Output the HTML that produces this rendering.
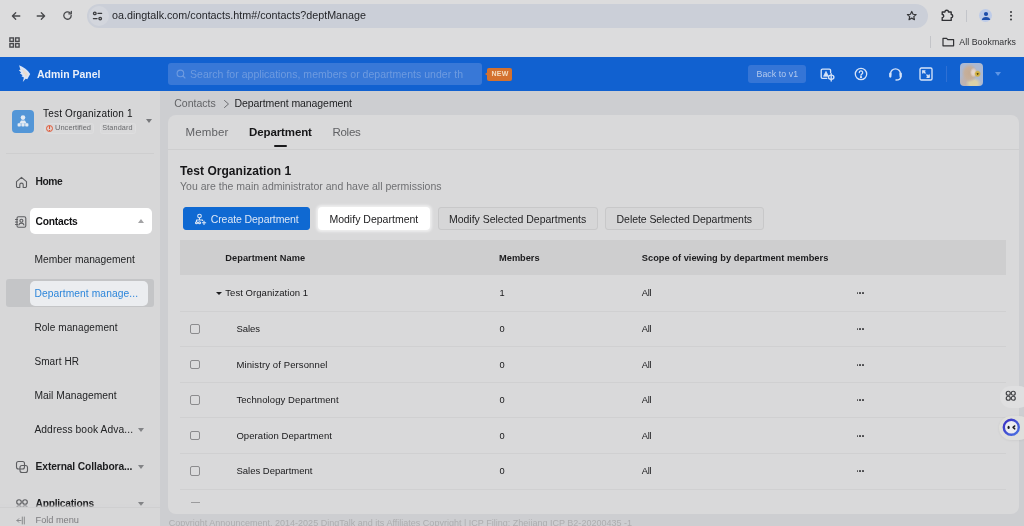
<!DOCTYPE html>
<html>
<head>
<meta charset="utf-8">
<style>
*{box-sizing:border-box;margin:0;padding:0}
html,body{width:1024px;height:526px;overflow:hidden;background:#cdced1;font-family:"Liberation Sans",sans-serif;color:#1a1a1a}
.abs{position:absolute}
.t{position:absolute;height:16px;line-height:16px;white-space:nowrap}
#chrome{position:absolute;left:0;top:0;width:1024px;height:57px;background:#dcdcdd}
#url{position:absolute;left:87px;top:4px;width:841px;height:24px;border-radius:12px;background:#cbcfd8}
#bar{position:absolute;left:0;top:57px;width:1024px;height:34px;background:#1161d0}
#search{position:absolute;left:168px;top:63px;width:314px;height:22px;border-radius:3px;background:#3878d7}
#back{position:absolute;left:748px;top:65px;width:58px;height:18px;border-radius:3px;background:#3575d6}
#side{position:absolute;left:0;top:91px;width:160px;height:435px;background:#d7d7d8}
#card{position:absolute;left:167.5px;top:114.5px;width:851.5px;height:399.5px;border-radius:8px;background:#d9d9da}
.btn{position:absolute;top:207px;height:24px;border-radius:3px;border:1px solid #c8c8c9;background:#d6d6d7}
.cb{position:absolute;left:190.3px;width:9.7px;height:9.7px;border:1px solid #8b8b8d;border-radius:2px;background:#dbdbdc}
.car{position:absolute;width:0;height:0;border-left:3px solid transparent;border-right:3px solid transparent}
</style>
</head>
<body>
<div id="wrap" style="position:absolute;left:0;top:0;width:1024px;height:526px;overflow:hidden;will-change:transform">
<div id="chrome">
  <div id="url"></div>
  <!-- nav icons -->
  <svg class="abs" style="left:10.500px;top:10.700px" width="10" height="10" viewBox="0 0 10 10" fill="none" stroke="#48494c" stroke-width="1.300" stroke-linecap="round" stroke-linejoin="round"><path d="M8.800 5H1.600M4.700 1.700L1.400 5l3.300 3.300"/></svg>
  <svg class="abs" style="left:36.200px;top:10.700px" width="10" height="10" viewBox="0 0 10 10" fill="none" stroke="#48494c" stroke-width="1.300" stroke-linecap="round" stroke-linejoin="round"><path d="M1.200 5h7.200M5.300 1.700L8.600 5 5.300 8.300"/></svg>
  <svg class="abs" style="left:61.800px;top:10.300px" width="11" height="11" viewBox="0 0 11 11" fill="none" stroke="#48494c" stroke-width="1.300" stroke-linecap="round" stroke-linejoin="round"><path d="M9.200 5.500a3.700 3.700 0 1 1-1.200-2.700"/><path d="M9.300 1.300v2.500H6.800" /></svg>
  <!-- site settings icon -->
  <div class="abs" style="left:88.500px;top:6px;width:20px;height:20px;border-radius:10px;background:#d3d6dd"></div>
  <svg class="abs" style="left:92.200px;top:9.800px" width="11" height="12" viewBox="0 0 11 12" fill="none" stroke="#3a3b3e" stroke-width="1.300" stroke-linecap="round"><circle cx="2.800" cy="3.400" r="1.300"/><path d="M6 3.400h3.600"/><circle cx="8.200" cy="8.600" r="1.300"/><path d="M1.400 8.600h3.600"/></svg>
  <!-- star -->
  <svg class="abs" style="left:905.500px;top:10px" width="11.500" height="11.500" viewBox="0 0 14 14" fill="none" stroke="#36373a" stroke-width="1.450" stroke-linejoin="round"><path d="M7 1.800l1.600 3.400 3.700.4-2.800 2.500.8 3.700L7 9.900l-3.300 1.900.8-3.700L1.700 5.600l3.700-.4z"/></svg>
  <!-- extensions -->
  <svg class="abs" style="left:940px;top:8px" width="15" height="14" viewBox="0 0 15 14" fill="none" stroke="#303135" stroke-width="1.350" stroke-linejoin="round"><path d="M2.200 4H4.900a1.800 1.800 0 0 1 3.600 0H11.200V6.500a1.550 1.550 0 0 1 0 3.100V12.400H2.200V9.600a1.550 1.550 0 0 0 0-3.100z"/></svg>
  <div class="abs" style="left:966px;top:9.500px;width:1px;height:12px;background:#c3c5ca"></div>
  <!-- profile -->
  <div class="abs" style="left:978.900px;top:8.800px;width:13.600px;height:13.600px;border-radius:7px;background:#bdcbe8"></div>
  <svg class="abs" style="left:980.700px;top:10.600px" width="10" height="10" viewBox="0 0 12 12" fill="#1c4daa"><circle cx="6" cy="3.600" r="2.500"/><path d="M1 10.800c0-2.600 2.300-3.700 5-3.700s5 1.100 5 3.700z"/></svg>
  <!-- menu dots -->
  <div class="abs" style="left:1010.200px;top:10.800px;width:2.300px;height:2.300px;border-radius:2px;background:#36373a;box-shadow:0 3.800px 0 #36373a,0 7.600px 0 #36373a"></div>
  <!-- bookmarks bar -->
  <svg class="abs" style="left:8.800px;top:36.600px" width="11" height="11" viewBox="0 0 12 12" fill="none" stroke="#48494c" stroke-width="1.500"><rect x="1" y="1" width="3.800" height="3.800"/><rect x="7.200" y="1" width="3.800" height="3.800"/><rect x="1" y="7.200" width="3.800" height="3.800"/><rect x="7.200" y="7.200" width="3.800" height="3.800"/></svg>
  <div class="abs" style="left:930px;top:36px;width:1px;height:12px;background:#c3c4c8"></div>
  <svg class="abs" style="left:941.500px;top:37px" width="13" height="10" viewBox="0 0 13 10" fill="none" stroke="#303135" stroke-width="1.200" stroke-linejoin="round"><path d="M1 1.300h3.600l1.200 1.300h5.800v6.200H1z"/></svg>
</div>
<div id="bar"></div>
<!-- logo -->
<svg class="abs" style="left:17px;top:64px" width="15" height="19" viewBox="0 0 15 19"><path fill="#dbe5f6" d="M2.100 1.300C6.200 2.800 11.200 6.300 13.200 10.100L10.300 15.300 8.600 14.700 5.800 18.100 6.900 13.600 4.500 12.300 5.500 11.300 2.800 9.300 4.200 8.700 1.800 5.900 3.400 5.700z"/><path fill="#e9dccf" d="M4.500 4.500C7 6 9.500 8 11 10.200L9.500 13 7.500 12 8 10.500 6 9.500 6.500 8.500z"/></svg>
<div id="search">
  <svg class="abs" style="left:8px;top:6px" width="10" height="10" viewBox="0 0 10 10" fill="none" stroke="#6e9be0" stroke-width="1.100" stroke-linecap="round"><circle cx="4.400" cy="4.400" r="3.300"/><path d="M7 7l2 2"/></svg>
</div>
<!-- NEW tag -->
<div class="abs" style="left:487px;top:68px;width:25px;height:12.500px;background:#d4712e;border-radius:2px;color:#f3dcc0;font-size:7px;font-weight:bold;text-align:center;line-height:12.500px;letter-spacing:0.200px;padding-left:1px">NEW</div>
<div class="abs" style="left:485px;top:71.700px;width:0;height:0;border-top:2.600px solid transparent;border-bottom:2.600px solid transparent;border-right:3px solid #d4712e"></div>
<div id="back"></div>
<!-- right icons -->
<svg class="abs" style="left:820px;top:68px" width="16" height="14" viewBox="0 0 16 14" fill="none" stroke="#d6e3f8" stroke-width="1.350" stroke-linejoin="round" stroke-linecap="round"><path d="M6.800 10.300H2.500a1.300 1.300 0 0 1-1.300-1.300V2.400a1.300 1.300 0 0 1 1.300-1.300h6.800a1.300 1.300 0 0 1 1.300 1.300v2"/><path d="M3.700 8L6 3.400 8.300 8z" fill="#d6e3f8" stroke-width="0.800"/><ellipse cx="11.200" cy="9.200" rx="2.700" ry="2.100"/><path d="M11.200 5.600v7.400"/></svg>
<svg class="abs" style="left:854.300px;top:67px" width="14" height="14" viewBox="0 0 14 14" fill="none" stroke="#d6e3f8" stroke-width="1.300" stroke-linecap="round"><circle cx="7" cy="7" r="5.700"/><path d="M5.300 5.600a1.700 1.700 0 1 1 2.500 1.500c-.5.300-.8.600-.8 1.200"/><circle cx="7" cy="10.200" r=".5" fill="#d6e3f8"/></svg>
<svg class="abs" style="left:888px;top:67px" width="15" height="14" viewBox="0 0 15 14" fill="none" stroke="#d6e3f8" stroke-width="1.400" stroke-linecap="round"><path d="M2.600 8V6.800a4.900 4.900 0 0 1 9.800 0V8"/><path d="M2.300 6.600v3M12.700 6.600v3" stroke-width="2.300"/><path d="M12.700 10c0 1.900-1.800 3-4.700 3"/></svg>
<svg class="abs" style="left:918.500px;top:67px" width="14" height="14" viewBox="0 0 14 14" fill="none" stroke="#d6e3f8" stroke-width="1.350" stroke-linejoin="round" stroke-linecap="round"><rect x="1" y="1" width="12" height="12" rx="1.300"/><path d="M3.800 6V3.800H6M3.800 3.800l2.300 2.300M10.200 8v2.200H8M10.200 10.200L7.900 7.900"/></svg>
<div class="abs" style="left:946px;top:66px;width:1px;height:16px;background:#2f70d4"></div>
<!-- avatar -->
<div class="abs" style="left:960px;top:63px;width:22.500px;height:22.500px;border-radius:4px;overflow:hidden;background:
radial-gradient(ellipse 1.300px 1.300px at 17.600px 10.800px,#5e4d14 0%,#5e4d14 50%,rgba(94,77,20,0) 100%),
radial-gradient(ellipse 3.400px 3.600px at 17.600px 10.800px,#d0b040 0%,#d0b040 60%,rgba(208,176,64,0) 100%),
radial-gradient(ellipse 3.500px 5px at 13.500px 9.500px,#e6d8cf 0%,#e2d2c8 50%,rgba(226,210,200,0) 100%),
radial-gradient(ellipse 8px 9.500px at 9.500px 10px,#c4ab94 0%,#c6af9b 60%,rgba(198,175,155,0) 100%),
radial-gradient(ellipse 8px 6px at 13.500px 20.500px,#dbd2a4 0%,#d9d0aa 50%,rgba(217,208,170,0) 100%),
radial-gradient(ellipse 8px 8px at 6px 19px,#bfb3b0 0%,#bfb3b0 40%,rgba(191,179,176,0) 100%),
#adb9d1"></div>
<div class="car" style="left:994.500px;top:72px;border-top:4.200px solid #5d95e6"></div>

<div id="side"></div>
<div id="card"></div>

<!-- SIDEBAR -->
<div class="abs" style="left:11.500px;top:110.400px;width:22.600px;height:22.700px;border-radius:4px;background:#5396d7"></div>
<svg class="abs" style="left:14.800px;top:113.800px" width="16" height="16" viewBox="0 0 16 16" fill="#e2eaf3"><circle cx="8" cy="3.600" r="2.300"/><path d="M4.300 9.600L6 6.600h4l1.700 3z"/><rect x="2.600" y="9.200" width="3.200" height="3.200" rx=".7"/><rect x="6.400" y="9.200" width="3.200" height="3.200" rx=".7"/><rect x="10.200" y="9.200" width="3.200" height="3.200" rx=".7"/></svg>
<div class="abs" style="left:43.500px;top:123.400px;width:50.500px;height:10.400px;border:1px solid #dededf;border-radius:2.500px;background:#d9d9da"></div>
<div class="abs" style="left:45.600px;top:124.600px;width:7.400px;height:7.400px;border-radius:4px;border:1.100px solid #df5a3a;background:#e2cfc9"></div>
<div class="abs" style="left:48.700px;top:126.300px;width:1.100px;height:2.600px;background:#df5a3a"></div>
<div class="abs" style="left:48.700px;top:129.500px;width:1.100px;height:1.100px;background:#df5a3a"></div>
<div class="abs" style="left:99.500px;top:123.400px;width:36.500px;height:10.400px;border:1px solid #dededf;border-radius:2.500px;background:#d9d9da"></div>
<div class="car" style="left:146.200px;top:119.300px;border-top:4.600px solid #77787b"></div>
<div class="abs" style="left:6px;top:152.500px;width:148px;height:1px;background:#cececf"></div>

<!-- Home icon -->
<svg class="abs" style="left:15px;top:175.500px" width="13" height="13" viewBox="0 0 13 13" fill="none" stroke="#5c5d60" stroke-width="1.100" stroke-linejoin="round" stroke-linecap="round"><path d="M1.500 5.600L6.500 1.300 11.500 5.600v4.600a1.300 1.300 0 0 1-1.300 1.300H8.200V8.800a1.700 1.700 0 0 0-3.400 0v2.700H2.800a1.300 1.300 0 0 1-1.300-1.300z"/></svg>
<!-- Contacts highlighted -->
<div class="abs" style="left:29.600px;top:207.700px;width:122.800px;height:26.800px;border-radius:5px;background:#ffffff"></div>
<svg class="abs" style="left:14px;top:215px" width="14" height="14" viewBox="0 0 14 14" fill="none" stroke="#5c5d60" stroke-width="1.100" stroke-linejoin="round" stroke-linecap="round"><rect x="3" y="1.700" width="8.800" height="10.600" rx="1.500"/><circle cx="7.400" cy="5.700" r="1.500"/><path d="M4.900 9.900c.3-1.300 1.300-1.800 2.500-1.800s2.200.5 2.500 1.800"/><path d="M1.500 4.500h2M1.500 7h2M1.500 9.500h2"/></svg>
<div class="car" style="left:138.400px;top:219.300px;border-bottom:4.400px solid #a3a3a5"></div>

<div class="abs" style="left:6px;top:279px;width:148px;height:27.800px;border-radius:3px;background:#c4c5c7"></div>
<div class="abs" style="left:30.200px;top:281px;width:118px;height:24.700px;border-radius:5px;background:#ebedf0"></div>
<div class="car" style="left:138.400px;top:427.5px;border-top:4.600px solid #828386"></div>

<svg class="abs" style="left:14.500px;top:460px" width="14" height="14" viewBox="0 0 14 14" fill="none" stroke="#5c5d60" stroke-width="1.100" stroke-linejoin="round" stroke-linecap="round"><rect x="1.500" y="1.500" width="8" height="7.500" rx="2"/><rect x="5" y="5.500" width="7.500" height="7" rx="2"/></svg>
<div class="car" style="left:138.400px;top:464.9px;border-top:4.600px solid #828386"></div>

<svg class="abs" style="left:14.500px;top:497.500px" width="14" height="14" viewBox="0 0 14 14" fill="none" stroke="#5c5d60" stroke-width="1.100"><circle cx="4" cy="4" r="2.300"/><circle cx="10" cy="4" r="2.300"/><circle cx="4" cy="10" r="2.300"/><circle cx="10" cy="10" r="2.300"/></svg>
<div class="car" style="left:138.400px;top:501.5px;border-top:4.600px solid #828386"></div>

<!-- MAIN -->
<svg class="abs" style="left:223px;top:98.500px" width="7" height="10" viewBox="0 0 7 10" fill="none" stroke="#6c6d70" stroke-width="1" stroke-linecap="round" stroke-linejoin="round"><path d="M1.500 1.500L5.500 5 1.500 8.500"/></svg>
<div class="abs" style="left:273.500px;top:144.500px;width:13.800px;height:2.300px;border-radius:1.200px;background:#1a1a1c"></div>
<div class="abs" style="left:167.500px;top:149px;width:851.500px;height:1px;background:#cececf"></div>

<!-- buttons -->
<div class="btn" style="left:183.300px;width:127px;background:#0f69d2;border-color:#0f69d2;top:207.100px;height:23.200px"></div>
<svg class="abs" style="left:193.500px;top:213px" width="13" height="12" viewBox="0 0 13 12" fill="none" stroke="#dfe8f6" stroke-width="1.100" stroke-linecap="round"><circle cx="5.500" cy="3" r="1.800"/><path d="M5.500 5v2M2.500 7h6M2.500 7v1.500M8.500 7v.5"/><circle cx="2.500" cy="9.800" r="1"/><circle cx="5.500" cy="9.800" r="1"/><path d="M10 8v3.500M8.300 9.800h3.400"/></svg>
<div class="abs" style="left:318.300px;top:207px;width:111.700px;height:23.400px;border-radius:4px;background:#ffffff;box-shadow:0 0 2.500px 1.200px rgba(255,255,255,0.550)"></div>
<div class="btn" style="left:437.700px;width:160.200px;top:207px;height:23.400px"></div>
<div class="btn" style="left:605.300px;width:158.400px;top:207px;height:23.400px"></div>

<!-- table -->
<div class="abs" style="left:179.600px;top:240.300px;width:826.400px;height:35px;background:#cececf"></div>
<div class="abs" style="left:215.7px;top:291.7px;width:0;height:0;border-left:3px solid transparent;border-right:3px solid transparent;border-top:3.8px solid #1d1d1f"></div><div class="abs" style="left:856.5px;top:292px;width:1.7px;height:2px;border-radius:0.5px;background:#4c4c4e"></div><div class="abs" style="left:859.2px;top:292px;width:1.7px;height:2px;border-radius:0.5px;background:#4c4c4e"></div><div class="abs" style="left:861.9px;top:292px;width:1.7px;height:2px;border-radius:0.5px;background:#4c4c4e"></div><div class="abs" style="left:180px;top:310.5px;width:826px;height:1px;background:#d0d0d1"></div>
<div class="cb" style="top:324.0px"></div><div class="abs" style="left:856.5px;top:328px;width:1.7px;height:2px;border-radius:0.5px;background:#4c4c4e"></div><div class="abs" style="left:859.2px;top:328px;width:1.7px;height:2px;border-radius:0.5px;background:#4c4c4e"></div><div class="abs" style="left:861.9px;top:328px;width:1.7px;height:2px;border-radius:0.5px;background:#4c4c4e"></div><div class="abs" style="left:180px;top:346.0px;width:826px;height:1px;background:#d0d0d1"></div>
<div class="cb" style="top:359.6px"></div><div class="abs" style="left:856.5px;top:364px;width:1.7px;height:2px;border-radius:0.5px;background:#4c4c4e"></div><div class="abs" style="left:859.2px;top:364px;width:1.7px;height:2px;border-radius:0.5px;background:#4c4c4e"></div><div class="abs" style="left:861.9px;top:364px;width:1.7px;height:2px;border-radius:0.5px;background:#4c4c4e"></div><div class="abs" style="left:180px;top:381.7px;width:826px;height:1px;background:#d0d0d1"></div>
<div class="cb" style="top:395.2px"></div><div class="abs" style="left:856.5px;top:399px;width:1.7px;height:2px;border-radius:0.5px;background:#4c4c4e"></div><div class="abs" style="left:859.2px;top:399px;width:1.7px;height:2px;border-radius:0.5px;background:#4c4c4e"></div><div class="abs" style="left:861.9px;top:399px;width:1.7px;height:2px;border-radius:0.5px;background:#4c4c4e"></div><div class="abs" style="left:180px;top:417.3px;width:826px;height:1px;background:#d0d0d1"></div>
<div class="cb" style="top:430.8px"></div><div class="abs" style="left:856.5px;top:435px;width:1.7px;height:2px;border-radius:0.5px;background:#4c4c4e"></div><div class="abs" style="left:859.2px;top:435px;width:1.7px;height:2px;border-radius:0.5px;background:#4c4c4e"></div><div class="abs" style="left:861.9px;top:435px;width:1.7px;height:2px;border-radius:0.5px;background:#4c4c4e"></div><div class="abs" style="left:180px;top:453.0px;width:826px;height:1px;background:#d0d0d1"></div>
<div class="cb" style="top:466.4px"></div><div class="abs" style="left:856.5px;top:470px;width:1.7px;height:2px;border-radius:0.5px;background:#4c4c4e"></div><div class="abs" style="left:859.2px;top:470px;width:1.7px;height:2px;border-radius:0.5px;background:#4c4c4e"></div><div class="abs" style="left:861.9px;top:470px;width:1.7px;height:2px;border-radius:0.5px;background:#4c4c4e"></div><div class="abs" style="left:180px;top:488.8px;width:826px;height:1px;background:#d0d0d1"></div>
<div class="abs" style="left:191px;top:502px;width:8.500px;height:1px;background:#9b9b9d"></div>

<div class="t" style="left:112.0px;top:7.0px;font-size:10.75px;color:#25262a;letter-spacing:0.001px;">oa.dingtalk.com/contacts.htm#/contacts?deptManage</div>
<div class="t" style="left:959.3px;top:33.8px;font-size:8.75px;color:#303134;letter-spacing:0.065px;">All Bookmarks</div>
<div class="t" style="left:37.0px;top:66.2px;font-size:10.5px;color:#e9eff9;letter-spacing:-0.010px;font-weight:bold;">Admin Panel</div>
<div class="t" style="left:190.0px;top:66.0px;font-size:10.5px;color:#6e9be0;letter-spacing:0.029px;">Search for applications, members or departments under th</div>
<div class="t" style="left:756.5px;top:66.0px;font-size:8.75px;color:#b4caee;letter-spacing:0.071px;">Back to v1</div>
<div class="t" style="left:43.0px;top:105.6px;font-size:10px;color:#131416;letter-spacing:0.191px;">Test Organization 1</div>
<div class="t" style="left:55.0px;top:120.4px;font-size:7.5px;color:#696a6d;letter-spacing:0.014px;">Uncertified</div>
<div class="t" style="left:102.3px;top:120.4px;font-size:7.25px;color:#696a6d;letter-spacing:0.109px;">Standard</div>
<div class="t" style="left:35.6px;top:174.4px;font-size:10.25px;color:#1b1c1e;letter-spacing:-0.460px;font-weight:bold;">Home</div>
<div class="t" style="left:35.6px;top:214.3px;font-size:10.25px;color:#111113;letter-spacing:-0.236px;font-weight:bold;">Contacts</div>
<div class="t" style="left:34.4px;top:251.9px;font-size:10.25px;color:#222325;letter-spacing:0.008px;">Member management</div>
<div class="t" style="left:34.4px;top:285.8px;font-size:10.25px;color:#2d86da;letter-spacing:0.085px;">Department manage...</div>
<div class="t" style="left:34.4px;top:320.3px;font-size:10.0px;color:#222325;letter-spacing:0.099px;">Role management</div>
<div class="t" style="left:34.4px;top:354.1px;font-size:10.0px;color:#222325;letter-spacing:0.101px;">Smart HR</div>
<div class="t" style="left:34.4px;top:388.1px;font-size:10.25px;color:#222325;letter-spacing:0.059px;">Mail Management</div>
<div class="t" style="left:34.4px;top:422.2px;font-size:10.25px;color:#222325;letter-spacing:0.091px;">Address book Adva...</div>
<div class="t" style="left:35.6px;top:459.0px;font-size:10.25px;color:#1b1c1e;letter-spacing:-0.121px;font-weight:bold;">External Collabora...</div>
<div class="t" style="left:35.6px;top:495.7px;font-size:10.25px;color:#1b1c1e;letter-spacing:-0.274px;font-weight:bold;">Applications</div>
<div class="t" style="left:174.3px;top:95.3px;font-size:10.5px;color:#626366;letter-spacing:-0.005px;">Contacts</div>
<div class="t" style="left:234.5px;top:95.3px;font-size:10.5px;color:#1d1e20;letter-spacing:-0.079px;">Department management</div>
<div class="t" style="left:185.6px;top:124.0px;font-size:11.5px;color:#606164;letter-spacing:0.105px;">Member</div>
<div class="t" style="left:249.1px;top:124.0px;font-size:11.5px;color:#161618;letter-spacing:-0.123px;font-weight:bold;">Department</div>
<div class="t" style="left:332.4px;top:124.0px;font-size:11.5px;color:#606164;letter-spacing:-0.253px;">Roles</div>
<div class="t" style="left:180.1px;top:162.8px;font-size:12.0px;color:#161618;letter-spacing:0.040px;font-weight:bold;">Test Organization 1</div>
<div class="t" style="left:180.0px;top:178.2px;font-size:10.5px;color:#6f7073;letter-spacing:0.008px;">You are the main administrator and have all permissions</div>
<div class="t" style="left:210.7px;top:211.1px;font-size:10.5px;color:#dde7f6;letter-spacing:-0.075px;">Create Department</div>
<div class="t" style="left:329.4px;top:211.1px;font-size:10.5px;color:#1b1b1d;letter-spacing:0.012px;">Modify Department</div>
<div class="t" style="left:449.0px;top:211.1px;font-size:10.5px;color:#242426;letter-spacing:-0.021px;">Modify Selected Departments</div>
<div class="t" style="left:616.6px;top:211.1px;font-size:10.5px;color:#242426;letter-spacing:-0.068px;">Delete Selected Departments</div>
<div class="t" style="left:225.3px;top:249.8px;font-size:9.25px;color:#1c1c1e;letter-spacing:0.045px;font-weight:bold;">Department Name</div>
<div class="t" style="left:499.1px;top:249.8px;font-size:9.25px;color:#1c1c1e;letter-spacing:-0.020px;font-weight:bold;">Members</div>
<div class="t" style="left:641.8px;top:249.8px;font-size:9.25px;color:#1c1c1e;letter-spacing:0.025px;font-weight:bold;">Scope of viewing by department members</div>
<div class="t" style="left:168.7px;top:515.4px;font-size:9.0px;color:#adadaf;letter-spacing:0.011px;">Copyright Announcement. 2014-2025 DingTalk and its Affiliates Copyright | ICP Filing: Zhejiang ICP B2-20200435 -1</div>
<div class="t" style="left:225.3px;top:285.2px;font-size:9.5px;color:#18181a;letter-spacing:0.052px;">Test Organization 1</div>
<div class="t" style="left:499.6px;top:285.2px;font-size:9.25px;color:#18181a;letter-spacing:0.000px;">1</div>
<div class="t" style="left:641.8px;top:285.2px;font-size:9.25px;color:#18181a;letter-spacing:-0.245px;">All</div>
<div class="t" style="left:236.4px;top:321.0px;font-size:9.5px;color:#18181a;letter-spacing:-0.066px;">Sales</div>
<div class="t" style="left:499.6px;top:321.0px;font-size:9.25px;color:#18181a;letter-spacing:0.000px;">0</div>
<div class="t" style="left:641.8px;top:321.0px;font-size:9.25px;color:#18181a;letter-spacing:-0.245px;">All</div>
<div class="t" style="left:236.4px;top:356.6px;font-size:9.5px;color:#18181a;letter-spacing:0.115px;">Ministry of Personnel</div>
<div class="t" style="left:499.6px;top:356.6px;font-size:9.25px;color:#18181a;letter-spacing:0.000px;">0</div>
<div class="t" style="left:641.8px;top:356.6px;font-size:9.25px;color:#18181a;letter-spacing:-0.245px;">All</div>
<div class="t" style="left:236.4px;top:392.2px;font-size:9.5px;color:#18181a;letter-spacing:0.093px;">Technology Department</div>
<div class="t" style="left:499.6px;top:392.2px;font-size:9.25px;color:#18181a;letter-spacing:0.000px;">0</div>
<div class="t" style="left:641.8px;top:392.2px;font-size:9.25px;color:#18181a;letter-spacing:-0.245px;">All</div>
<div class="t" style="left:236.4px;top:427.8px;font-size:9.5px;color:#18181a;letter-spacing:0.079px;">Operation Department</div>
<div class="t" style="left:499.6px;top:427.8px;font-size:9.25px;color:#18181a;letter-spacing:0.000px;">0</div>
<div class="t" style="left:641.8px;top:427.8px;font-size:9.25px;color:#18181a;letter-spacing:-0.245px;">All</div>
<div class="t" style="left:236.4px;top:463.4px;font-size:9.5px;color:#18181a;letter-spacing:0.004px;">Sales Department</div>
<div class="t" style="left:499.6px;top:463.4px;font-size:9.25px;color:#18181a;letter-spacing:0.000px;">0</div>
<div class="t" style="left:641.8px;top:463.4px;font-size:9.25px;color:#18181a;letter-spacing:-0.245px;">All</div>

<!-- fold bar -->
<div class="abs" style="left:0;top:503.500px;width:160px;height:3.500px;background:linear-gradient(to bottom,rgba(214,214,215,0),rgba(214,214,215,0.700))"></div>
<div class="abs" style="left:0;top:506.500px;width:160px;height:19.500px;background:#d7d7d8;border-top:1px solid #cfcfd0"></div>
<svg class="abs" style="left:15.500px;top:515.500px" width="9" height="9" viewBox="0 0 9 9" fill="none" stroke="#8a8b8e" stroke-width="1" stroke-linecap="round" stroke-linejoin="round"><path d="M5 4.500H1M2.800 2.700L1 4.500l1.800 1.800"/><path d="M6.300 1v7M8.300 1v7"/></svg>
<div class="t" style="left:35.600px;top:511.500px;font-size:9.250px;color:#7c7c7f;letter-spacing:-0.050px">Fold menu</div>

<!-- floating right -->
<div class="abs" style="left:999.500px;top:386px;width:30px;height:21.500px;border-radius:11px;background:#dfdfe0"></div>
<svg class="abs" style="left:1004.800px;top:390.300px" width="11.500" height="11.500" viewBox="0 0 12 12" fill="none" stroke="#424346" stroke-width="1.250"><circle cx="3.400" cy="3.400" r="2.100"/><circle cx="8.600" cy="3.400" r="2.100"/><circle cx="3.400" cy="8.600" r="2.100"/><circle cx="8.600" cy="8.600" r="2.100"/></svg>
<div class="abs" style="left:998.500px;top:415.700px;width:32px;height:24.300px;border-radius:12px;background:#dfdfdc;box-shadow:0 0.500px 2.500px rgba(0,0,0,0.070)"></div>
<svg class="abs" style="left:1001.900px;top:418.300px" width="19" height="19" viewBox="0 0 19 19"><defs><linearGradient id="rg" x1="0" y1="0" x2="1" y2="1"><stop offset="0" stop-color="#3a2fc4"/><stop offset="1" stop-color="#4a72e2"/></linearGradient></defs><circle cx="9.300" cy="9.300" r="7.500" fill="#ececf0" stroke="url(#rg)" stroke-width="2.400"/><ellipse cx="6.600" cy="9.400" rx="1.100" ry="1.600" fill="#1c1c22"/><path d="M12.800 7.900L11 9.400l1.800 1.500" fill="none" stroke="#1c1c22" stroke-width="1.400" stroke-linecap="round" stroke-linejoin="round"/></svg>
</div>
</body>
</html>
